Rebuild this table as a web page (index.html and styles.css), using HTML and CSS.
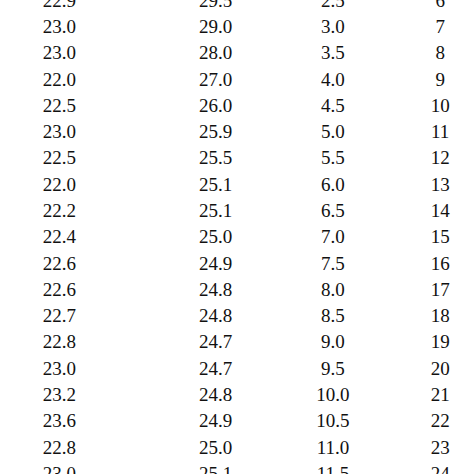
FILE: index.html
```html
<!DOCTYPE html>
<html>
<head>
<meta charset="utf-8">
<link rel="stylesheet" href="styles.css">
</head>
<body>
<div class="table">
  <div class="row"><span>22.9</span><span>29.5</span><span>2.5</span><span>6</span></div>
  <div class="row"><span>23.0</span><span>29.0</span><span>3.0</span><span>7</span></div>
  <div class="row"><span>23.0</span><span>28.0</span><span>3.5</span><span>8</span></div>
  <div class="row"><span>22.0</span><span>27.0</span><span>4.0</span><span>9</span></div>
  <div class="row"><span>22.5</span><span>26.0</span><span>4.5</span><span>10</span></div>
  <div class="row"><span>23.0</span><span>25.9</span><span>5.0</span><span>11</span></div>
  <div class="row"><span>22.5</span><span>25.5</span><span>5.5</span><span>12</span></div>
  <div class="row"><span>22.0</span><span>25.1</span><span>6.0</span><span>13</span></div>
  <div class="row"><span>22.2</span><span>25.1</span><span>6.5</span><span>14</span></div>
  <div class="row"><span>22.4</span><span>25.0</span><span>7.0</span><span>15</span></div>
  <div class="row"><span>22.6</span><span>24.9</span><span>7.5</span><span>16</span></div>
  <div class="row"><span>22.6</span><span>24.8</span><span>8.0</span><span>17</span></div>
  <div class="row"><span>22.7</span><span>24.8</span><span>8.5</span><span>18</span></div>
  <div class="row"><span>22.8</span><span>24.7</span><span>9.0</span><span>19</span></div>
  <div class="row"><span>23.0</span><span>24.7</span><span>9.5</span><span>20</span></div>
  <div class="row"><span>23.2</span><span>24.8</span><span>10.0</span><span>21</span></div>
  <div class="row"><span>23.6</span><span>24.9</span><span>10.5</span><span>22</span></div>
  <div class="row"><span>22.8</span><span>25.0</span><span>11.0</span><span>23</span></div>
  <div class="row"><span>23.0</span><span>25.1</span><span>11.5</span><span>24</span></div>
</div>
</body>
</html>
```

FILE: styles.css
```css
html, body {
  margin: 0;
  padding: 0;
  background: #ffffff;
  overflow: hidden;
  width: 474px;
  height: 474px;
}

.table {
  margin-top: -12.4px;
  font-family: "Liberation Serif", "Times New Roman", serif;
  font-size: 19px;
  line-height: 26.3px;
  color: #111111;
}

.row {
  display: grid;
  grid-template-columns: 118.6px 194.2px 40.4px 1fr;
  height: 26.3px;
}

.row span {
  text-align: center;
  white-space: nowrap;
}

.row span:last-child {
  padding-left: 53.2px;
}
```
